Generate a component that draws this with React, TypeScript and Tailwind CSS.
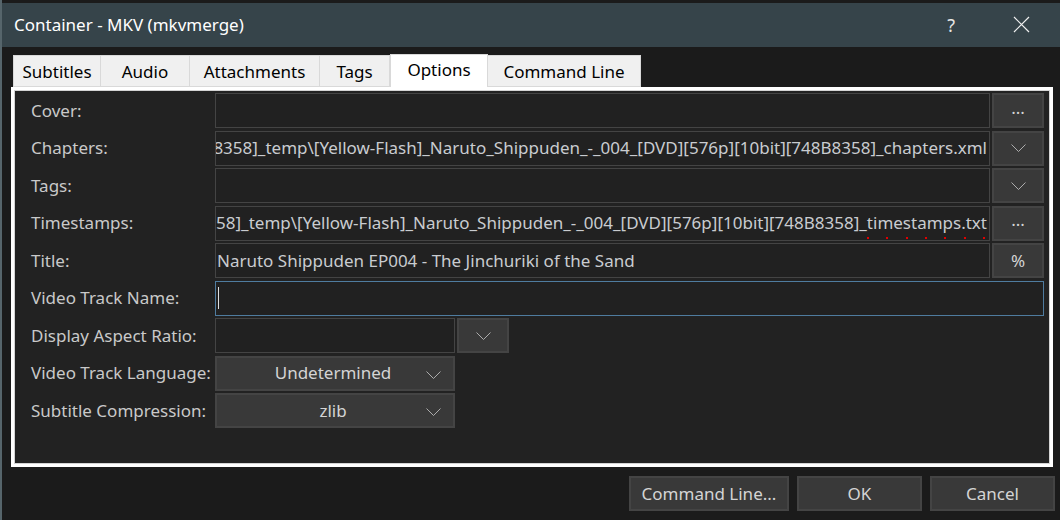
import React from 'react';

const FONT = { fontFamily: '"Noto Sans", "Open Sans", sans-serif' };

function Chevron({ className = '' }: { className?: string }) {
  return (
    <svg width="15" height="8" viewBox="0 0 15 8" className={className}>
      <path d="M0.5 0.5 L7.5 7.5 L14.5 0.5" fill="none" stroke="#b9b9b9" strokeWidth="0.9" />
    </svg>
  );
}

function Field({ children, className = '' }: { children?: React.ReactNode; className?: string }) {
  return (
    <div
      className={`relative h-full flex-1 min-w-0 overflow-hidden border border-[#444444] bg-[#212121] flex items-center justify-end whitespace-nowrap text-[#c9ccd0] ${className}`}
    >
      {children}
    </div>
  );
}

function SideButton({ children }: { children: React.ReactNode }) {
  return (
    <div className="ml-[2px] h-full w-[52px] shrink-0 border-2 border-[#444444] bg-[#393939] flex items-center justify-center text-[#d4d4d4]">
      {children}
    </div>
  );
}

function Combo({ value }: { value: string }) {
  return (
    <div className="relative h-full w-[240px] border-2 border-[#444444] bg-[#393939] flex items-center justify-center text-[#d4d4d4]">
      <span className="-ml-[4px]">{value}</span>
      <Chevron className="absolute right-[12px] top-[13px]" />
    </div>
  );
}

function Row({ label, children }: { label: string; children: React.ReactNode }) {
  return (
    <div className="flex items-center h-[35px]">
      <div className="w-[184px] shrink-0 text-[#c9c9c9]">{label}</div>
      <div className="flex flex-1 min-w-0 h-full items-stretch">{children}</div>
    </div>
  );
}

// paths are scrolled to their end, so only the tail is visible
const tail = '_temp\\[Yellow-Flash]_Naruto_Shippuden_-_004_[DVD][576p][10bit][748B8358]';

export default function App() {
  const tabs = [
    { name: 'Subtitles', w: 88 },
    { name: 'Audio', w: 89 },
    { name: 'Attachments', w: 130 },
    { name: 'Tags', w: 70 },
    { name: 'Options', w: 98, active: true },
    { name: 'Command Line', w: 153 },
  ];

  return (
    <div style={FONT} className="w-[1060px] h-[520px] overflow-hidden bg-[#1b1b1b] text-[17px] flex flex-col border-l-2 border-[#56656b]">
      <div className="h-[3px] bg-[#1b1b1b]" />
      <div className="h-[44px] bg-[#36444a] flex items-center pl-[12px] pr-[30px] text-white">
        <span className="-mt-[1px]">Container - MKV (mkvmerge)</span>
        <span className="ml-auto mr-[58px] text-[#e6e6e6] text-[18px]">?</span>
        <svg width="17" height="17" viewBox="0 0 17 17" className="-mt-[2px]">
          <path d="M1 1 L16 16 M16 1 L1 16" stroke="#f0f0f0" strokeWidth="1.2" />
        </svg>
      </div>

      <div className="pt-[8px] pl-[11px] flex items-end h-[40px]">
        {tabs.map((t) => (
          <div
            key={t.name}
            style={{ width: t.w }}
            className={
              t.active
                ? 'h-[33px] bg-white border border-[#d9d9d9] border-b-0 text-black flex items-center justify-center pb-[3px]'
                : 'h-[32px] bg-[#f0f0f0] border border-[#d9d9d9] border-l-0 first:border-l text-black flex items-center justify-center pt-[1px]'
            }
          >
            {t.name}
          </div>
        ))}
      </div>

      <div className="ml-[9px] w-[1042px] h-[380px] border-[3px] border-white bg-[#222222]">
        <div className="h-full border border-[#d4d4d4] bg-[#222222] pt-[2px] pl-[16px] pr-[5px] flex flex-col gap-[2.5px]">
          <Row label="Cover:">
            <Field />
            <SideButton><span className="-mt-[6px]">...</span></SideButton>
          </Row>
          <Row label="Chapters:">
            <Field><span className="shrink-0 pr-[2px]">{'B8358]' + tail}_chapters.xml</span></Field>
            <SideButton><Chevron /></SideButton>
          </Row>
          <Row label="Tags:">
            <Field />
            <SideButton><Chevron /></SideButton>
          </Row>
          <Row label="Timestamps:">
            <Field>
              <span className="shrink-0 pr-[2px]">{'8358]' + tail}_timestamps.txt</span>
              <span className="absolute right-[4px] bottom-[1px] w-[118px] flex justify-between">
                {[0, 1, 2, 3, 4, 5, 6].map((i) => (
                  <span key={i} className="block w-[2px] h-[2px] bg-[#e00000]" />
                ))}
              </span>
            </Field>
            <SideButton><span className="-mt-[6px]">...</span></SideButton>
          </Row>
          <Row label="Title:">
            <Field className="justify-start pl-[1px]">
              <span>Naruto Shippuden EP004 - The Jinchuriki of the Sand</span>
            </Field>
            <SideButton>%</SideButton>
          </Row>
          <Row label="Video Track Name:">
            <div className="h-full flex-1 border border-[#4f7c9f] bg-[#212121] flex items-center pl-[2px]">
              <span className="block w-[1px] h-[22px] bg-[#e0e0e0]" />
            </div>
          </Row>
          <Row label="Display Aspect Ratio:">
            <div className="h-full w-[240px] border border-[#444444] bg-[#212121]" />
            <SideButton><Chevron /></SideButton>
          </Row>
          <Row label="Video Track Language:">
            <Combo value="Undetermined" />
          </Row>
          <Row label="Subtitle Compression:">
            <Combo value="zlib" />
          </Row>
        </div>
      </div>

      <div className="flex justify-end gap-[8px] pr-[5px] pt-[9px]">
        <div className="w-[160px] h-[35px] border-2 border-[#444444] bg-[#393939] flex items-center justify-center text-[#d4d4d4]">Command Line...</div>
        <div className="w-[125px] h-[35px] border-2 border-[#444444] bg-[#393939] flex items-center justify-center text-[#d4d4d4]">OK</div>
        <div className="w-[125px] h-[35px] border-2 border-[#444444] bg-[#393939] flex items-center justify-center text-[#d4d4d4]">Cancel</div>
      </div>
    </div>
  );
}
